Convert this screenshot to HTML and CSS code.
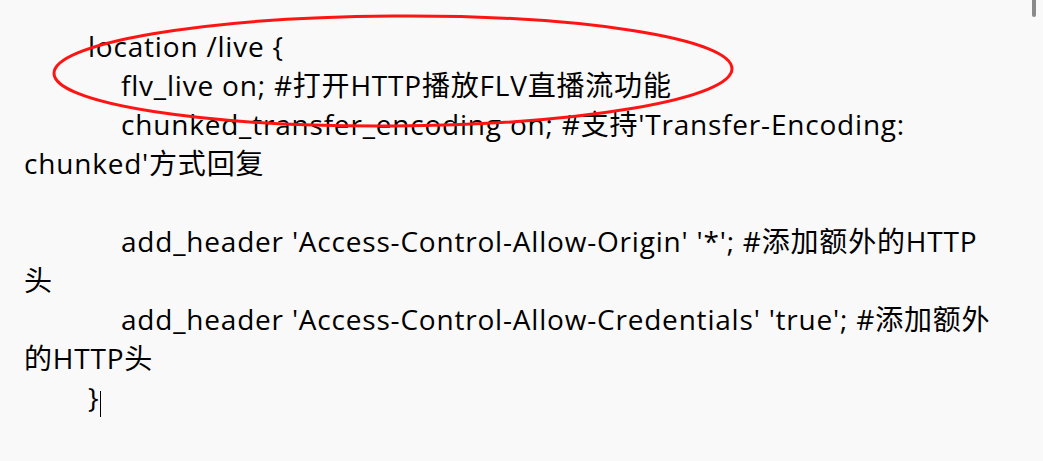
FILE: index.html
```html
<!DOCTYPE html>
<html lang="zh-CN">
<head>
    <meta charset="UTF-8">
    <meta name="viewport" content="width=device-width, initial-scale=1.0">
    <title>nginx flv 配置</title>
    <link rel="stylesheet" href="styles.css">
</head>
<body>
    <div class="page">
        <div class="doc">
            <div class="line indent1">location /live {</div>
            <div class="line indent2">flv_live on; #打开HTTP播放FLV直播流功能</div>
            <div class="line indent2">chunked_transfer_encoding on; #支持'Transfer-Encoding: chunked'方式回复</div>
            <div class="line empty"></div>
            <div class="line indent2">add_header 'Access-Control-Allow-Origin' '*'; #添加额外的HTTP头</div>
            <div class="line indent2">add_header 'Access-Control-Allow-Credentials' 'true'; #添加额外的HTTP头</div>
            <div class="line indent1">}<span class="caret"></span></div>
        </div>

        <svg class="mark" width="700" height="130" viewBox="0 0 700 130">
            <ellipse cx="342" cy="57" rx="339" ry="55" transform="rotate(-0.4 342 57)" />
        </svg>

        <div class="scroll-thumb"></div>
    </div>
</body>
</html>
```

FILE: styles.css
```css
* {
    padding: 0;
    margin: 0;
    box-sizing: border-box;
}

html, body {
    height: 100%;
    background-color: #f9f9f9;
    overflow: hidden;
}

.page {
    position: relative;
    height: 100%;
}

.doc {
    width: 1005px;
    padding: 27px 0 0 24px;
    font-family: "Open Sans", "Noto Sans CJK SC", sans-serif;
    font-size: 28px;
    letter-spacing: 0.8px;
    line-height: 39px;
    color: #000;
}

.line {
    min-height: 39px;
}

.indent1 {
    text-indent: 64px;
}

.indent2 {
    text-indent: 97px;
}

.caret {
    display: inline-block;
    width: 1px;
    height: 26px;
    margin-left: 1px;
    vertical-align: -9px;
    background-color: #000;
}

.mark {
    position: absolute;
    left: 51px;
    top: 14px;
    overflow: visible;
}

.mark ellipse {
    fill: none;
    stroke: #ff1414;
    stroke-width: 3;
}

.scroll-thumb {
    position: absolute;
    top: 0;
    left: 1032px;
    width: 4px;
    height: 17px;
    border-radius: 0 0 2px 2px;
    background-color: #8a8a8a;
}
```
